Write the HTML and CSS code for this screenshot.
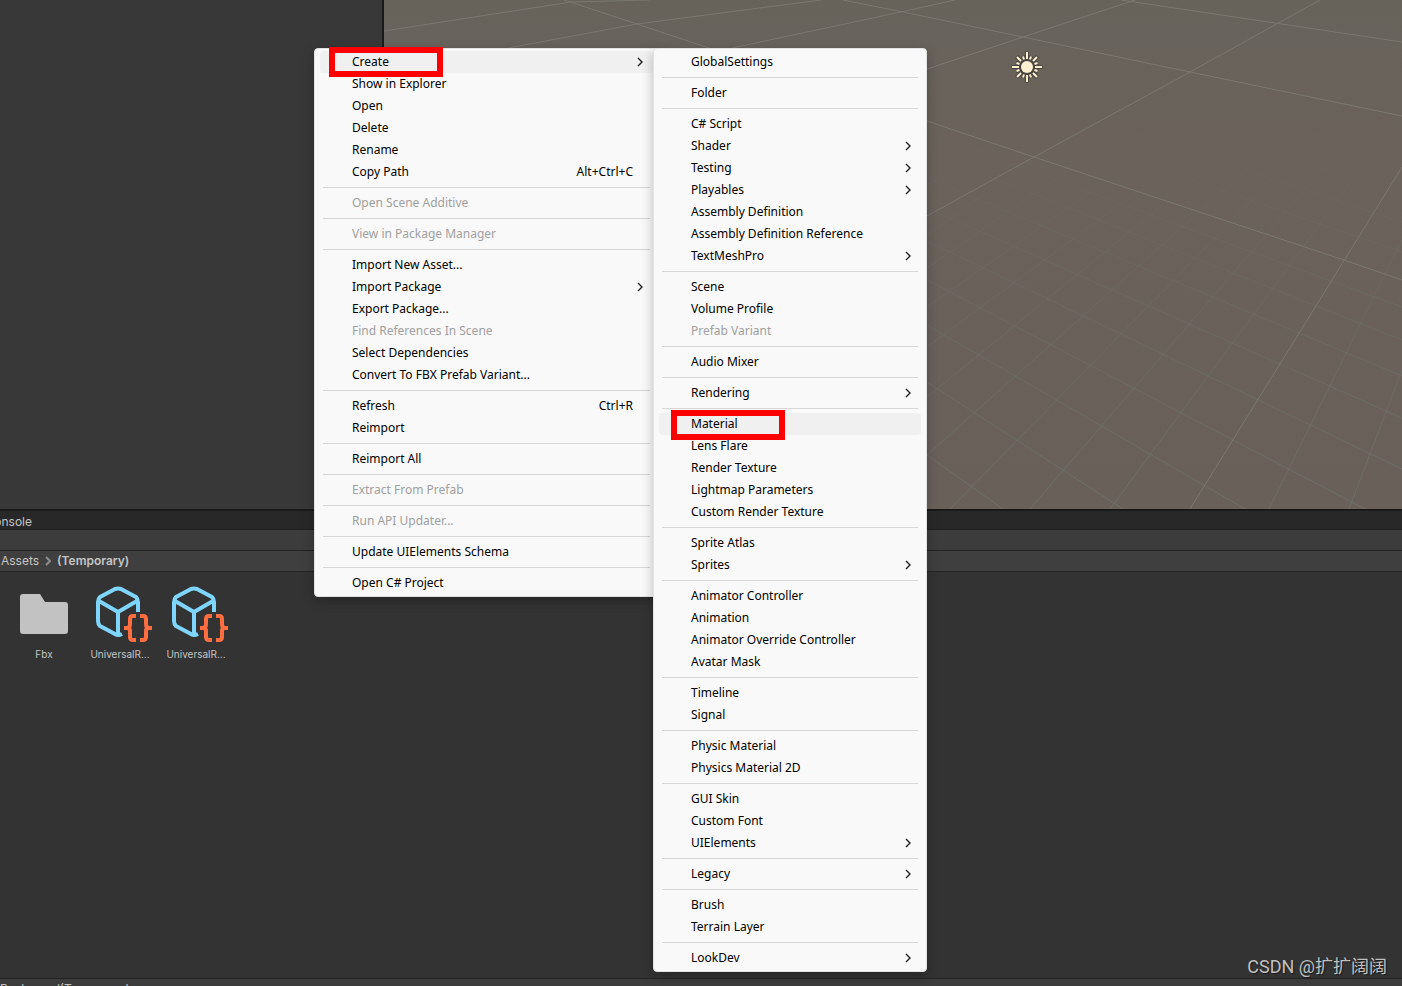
FILE: index.html
```html
<!DOCTYPE html>
<html lang="en">
<head>
    <meta charset="UTF-8">
    <meta name="viewport" content="width=device-width, initial-scale=1.0">
    <title>Assets - Create Material</title>
    <link rel="stylesheet" href="styles.css">
</head>
<body>

    <div class="editor">
        <!-- Hierarchy + Scene view -->
        <main class="top-row">
            <aside class="hierarchy"></aside>
            <section class="scene" aria-label="Scene">
                <svg class="grid" viewBox="384 0 1018 509" preserveAspectRatio="xMinYMin slice" aria-hidden="true">
                    <defs>
                        <linearGradient id="fade" x1="0" y1="90" x2="0" y2="509" gradientUnits="userSpaceOnUse">
                            <stop offset="0" stop-color="#6d736c" stop-opacity="0"/>
                            <stop offset="0.5" stop-color="#6d736c" stop-opacity="0.4"/>
                            <stop offset="1" stop-color="#6d736c" stop-opacity="0.8"/>
                        </linearGradient>
                    </defs>
                    <!-- Small cells -->
                    <g fill="none" stroke="url(#fade)">
                        <path d="M927 455 1003 509M927 382 1123 509M927 325 1245 509M927 280 1365 509M927 241 1402 469M927 208 1402 418M927 178 1402 376M927 152 1402 340M927 133 1402 307"/>
                        <path d="M1000 115 1402 252M1060 108 1402 222M1120 104 1402 194M1200 102 1402 160"/>
                        <path d="M1122 170 927 307M1180 160 927 347M1230 150 927 397M1280 140 927 455M1330 120 950 509M1365 120 1030 509M1397 120 1110 509M1402 240 1269 509M1402 370 1349 509"/>
                        <path d="M1075 165 927 268M1040 155 927 235M1010 130 927 185M980 115 927 150"/>
                    </g>
                    <!-- Big cells -->
                    <g fill="none" stroke="#79776f">
                        <path d="M843 0 903 12 1023 37 1190 72 1402 116M1121 0 1402 42M927 121 1034 157 1344 260 1402 280M564 0 637 24 709 48"/>
                        <path d="M1320 0 1190 72 1034 157 927 216M1135 0 1023 37 927 69M955 0 901 12 732 48M821 0 637 24 508 48M649 0 571 2 384 31M1402 167 1332 280 1190 509"/>
                    </g>
                    <!-- Directional light gizmo -->
                    <g transform="translate(1027 67)">
                        <circle r="8" fill="#4b4640"/>
                        <g stroke="#4b4640" stroke-width="4">
                            <path d="M0-15.500V-8M0 15.500V8M-15.500 0H-8M15.500 0H8M-10.500-10.500-6-6M10.500-10.500 6-6M-10.500 10.500-6 6M10.500 10.500 6 6"/>
                            <path d="M-4-11-3-7M4-11 3-7M-4 11-3 7M4 11 3 7M-11-4-7-3M11-4 7-3M-11 4-7 3M11 4 7 3"/>
                        </g>
                        <g stroke="#fff0d2" stroke-width="2">
                            <path d="M0-15V-8M0 15V8M-15 0H-8M15 0H8M-10-10-6-6M10-10 6-6M-10 10-6 6M10 10 6 6"/>
                            <path d="M-4-10.500-3-7.500M4-10.500 3-7.500M-4 10.500-3 7.500M4 10.500 3 7.500M-10.500-4-7.500-3M10.500-4 7.500-3M-10.500 4-7.500 3M10.500 4 7.500 3"/>
                        </g>
                        <circle r="6" fill="#fff0d2"/>
                    </g>
                </svg>
            </section>
        </main>

        <!-- Project window -->
        <section class="project" aria-label="Project">
            <div class="tabs"><button class="tab">Console</button></div>
            <div class="toolbar"></div>
            <nav class="breadcrumb" aria-label="Path">
                <a href="#">Assets</a>
                <svg width="6" height="10" viewBox="0 0 6 10" aria-hidden="true"><path d="M1 1l4 4-4 4" fill="none" stroke="#8c8c8c" stroke-width="2"/></svg>
                <a href="#" class="current">(Temporary)</a>
            </nav>
            <div class="assets">
                <button class="asset">
                    <svg width="60" height="60" viewBox="0 0 60 60" aria-hidden="true"><path d="M9 11H26L31 19H51Q54 19 54 22V48Q54 51 51 51H9Q6 51 6 48V14Q6 11 9 11Z" fill="#c2c2c2"/></svg>
                    <span>Fbx</span>
                </button>
                <button class="asset">
                    <svg width="60" height="60" viewBox="0 0 60 60" aria-hidden="true"><use href="#cube"/></svg>
                    <span>UniversalR...</span>
                </button>
                <button class="asset">
                    <svg width="60" height="60" viewBox="0 0 60 60" aria-hidden="true">
                        <g id="cube" fill="none">
                            <path d="M48 29V19Q48 16 46 14L31 6Q28 5 25 6L10 14Q8 16 8 19V38Q8 41 10 43L25 51Q28 53 32 51M9 18 28 29 47 18M28 29V52" stroke="#7fd6fd" stroke-width="4" stroke-linejoin="round"/>
                            <path d="M46 33H43Q40 33 40 36V41Q40 45 37 45H34H37Q40 45 40 48V54Q40 57 43 57H46M50 33H53Q56 33 56 36V41Q56 45 59 45H62H59Q56 45 56 48V54Q56 57 53 57H50" stroke="#ff6e40" stroke-width="4"/>
                        </g>
                    </svg>
                    <span>UniversalR...</span>
                </button>
            </div>
            <footer class="status">Packages/(Temporary)</footer>
        </section>
    </div>

    <!-- Context menu, rows come from the script -->
    <div class="menu menu-assets" id="assetsMenu" role="menu" aria-label="Assets"></div>
    <div class="menu menu-create" id="createMenu" role="menu" aria-label="Create"></div>

    <!-- Red frames round the two steps -->
    <div class="frame frame-create"></div>
    <div class="frame frame-material"></div>

    <div class="watermark">CSDN @扩扩阔阔</div>

    <script src="menu.js"></script>
</body>
</html>
```

FILE: styles.css
```css
/* --- Basic Page Styles --- */
* { box-sizing: border-box; }
body {
    margin: 0;
    background: #333;
    color: #c4c4c4;
    font-family: Inter, "Liberation Sans", sans-serif;
    font-size: 12px;
    overflow: hidden;
}
button {
    margin: 0; padding: 0;
    border: none; background: none;
    color: inherit; font: inherit;
}
a { color: inherit; text-decoration: none; }

.editor {
    display: flex; flex-direction: column;
    height: 100vh;
}

/* --- Top: hierarchy and scene --- */
.top-row {
    flex: 1 1 0;
    display: flex;
    min-height: 0;
}
.hierarchy {
    flex: 0 0 384px;
    background: #383838;
    border-right: 2px solid #1a1a1a;
}
.scene {
    flex: 1;
    min-width: 0;
    background: linear-gradient(#67635b, #6a625b 30%, #69605a);
    overflow: hidden;
}
.grid { display: block; width: 100%; height: 100%; }

/* --- Project window --- */
.project {
    flex: 0 0 477px;
    display: flex; flex-direction: column;
    border-top: 2px solid #191919;
}
.tabs {
    height: 19px;
    background: #282828;
    border-bottom: 1px solid #1f1f1f;
}
/* Tab is cut by the window's left edge */
.tab {
    display: flex; justify-content: flex-end;
    width: 32px;
    line-height: 22px;
    overflow: hidden;
}
.toolbar {
    height: 21px;
    background: #3c3c3c;
    border-bottom: 1px solid #232323;
}
.breadcrumb {
    display: flex; align-items: center; gap: 6px;
    height: 21px;
    padding-left: 1px;
    background: #3f3f3f;
    border-bottom: 1px solid #242424;
    line-height: 20px;
}
.breadcrumb .current { font-weight: 600; }

.assets {
    flex: 1;
    display: flex; align-items: flex-start; gap: 16px;
    padding: 11px 14px;
}
.asset {
    display: flex; flex-direction: column; align-items: center; gap: 4px;
    width: 60px;
    font-size: 10px; line-height: 14px;
}
.asset svg { overflow: visible; }

.status {
    height: 8px;
    border-top: 1px solid #232323;
    background: #3c3c3c;
    line-height: 20px;
    overflow: hidden;
}

/* --- Context menus --- */
.menu {
    position: absolute;
    top: 48px;
    padding: 2px 5px;
    background: #f9f9f9;
    border: 1px solid #e3e3e3;
    border-radius: 4px;
    box-shadow: 0 4px 12px rgba(0, 0, 0, 0.25);
    color: #000;
    font-family: "Noto Sans", sans-serif;
}
.menu-assets { left: 314px; width: 345px; }
.menu-create { left: 653px; width: 274px; }

.item {
    display: flex; align-items: center; justify-content: space-between;
    width: 100%; height: 22px;
    padding: 0 20px 0 32px;
    border-radius: 4px;
    line-height: 22px;
    text-align: left;
}
.item.active { background: #f0f0f0; }
.item:disabled { color: #a0a0a0; }
.item svg { margin-right: -10px; }
.menu hr {
    margin: 4px 3px;
    border: none;
    border-top: 1px solid #d7d7d7;
}

/* --- Frames and watermark --- */
.frame {
    position: absolute;
    width: 114px; height: 30px;
    border: 6px solid #f00;
}
.frame-create { left: 329px; top: 47px; }
.frame-material { left: 671px; top: 410px; }

.watermark {
    position: absolute;
    right: 15px; bottom: 6px;
    color: #c0c0c0;
    font-family: Roboto, "Noto Sans CJK SC", sans-serif;
    font-size: 18px; line-height: 26px;
    text-shadow: 1px 1px 1px #1a1a1a;
}
```

FILE: menu.js
```js
// "-" is a separator, otherwise [label, options]
const assetsMenu = [
    ['Create', { sub: true, active: true }], ['Show in Explorer'], ['Open'], ['Delete'], ['Rename'],
    ['Copy Path', { key: 'Alt+Ctrl+C' }], '-',
    ['Open Scene Additive', { off: true }], '-',
    ['View in Package Manager', { off: true }], '-',
    ['Import New Asset...'], ['Import Package', { sub: true }], ['Export Package...'],
    ['Find References In Scene', { off: true }], ['Select Dependencies'],
    ['Convert To FBX Prefab Variant...'], '-',
    ['Refresh', { key: 'Ctrl+R' }], ['Reimport'], '-',
    ['Reimport All'], '-',
    ['Extract From Prefab', { off: true }], '-',
    ['Run API Updater...', { off: true }], '-',
    ['Update UIElements Schema'], '-',
    ['Open C# Project']
];

const createMenu = [
    ['GlobalSettings'], '-',
    ['Folder'], '-',
    ['C# Script'], ['Shader', { sub: true }], ['Testing', { sub: true }], ['Playables', { sub: true }],
    ['Assembly Definition'], ['Assembly Definition Reference'], ['TextMeshPro', { sub: true }], '-',
    ['Scene'], ['Volume Profile'], ['Prefab Variant', { off: true }], '-',
    ['Audio Mixer'], '-',
    ['Rendering', { sub: true }], '-',
    ['Material', { active: true }], ['Lens Flare'], ['Render Texture'], ['Lightmap Parameters'],
    ['Custom Render Texture'], '-',
    ['Sprite Atlas'], ['Sprites', { sub: true }], '-',
    ['Animator Controller'], ['Animation'], ['Animator Override Controller'], ['Avatar Mask'], '-',
    ['Timeline'], ['Signal'], '-',
    ['Physic Material'], ['Physics Material 2D'], '-',
    ['GUI Skin'], ['Custom Font'], ['UIElements', { sub: true }], '-',
    ['Legacy', { sub: true }], '-',
    ['Brush'], ['Terrain Layer'], '-',
    ['LookDev', { sub: true }]
];

const arrow = '<svg width="6" height="10" viewBox="0 0 6 10" aria-hidden="true"><path d="M1 1l4 4-4 4" fill="none" stroke="#222" stroke-width="1.4"/></svg>';

function fill(id, rows) {
    const menu = document.getElementById(id);
    rows.forEach(row => {
        if (row === '-') {
            menu.appendChild(document.createElement('hr'));
            return;
        }
        const [label, opt = {}] = row;
        const item = document.createElement('button');
        item.className = opt.active ? 'item active' : 'item';
        item.setAttribute('role', 'menuitem');
        item.disabled = !!opt.off;
        item.innerHTML = '<span>' + label + '</span>';
        if (opt.key) item.innerHTML += '<span>' + opt.key + '</span>';
        if (opt.sub) item.innerHTML += arrow;
        menu.appendChild(item);
    });
}

fill('assetsMenu', assetsMenu);
fill('createMenu', createMenu);
```
